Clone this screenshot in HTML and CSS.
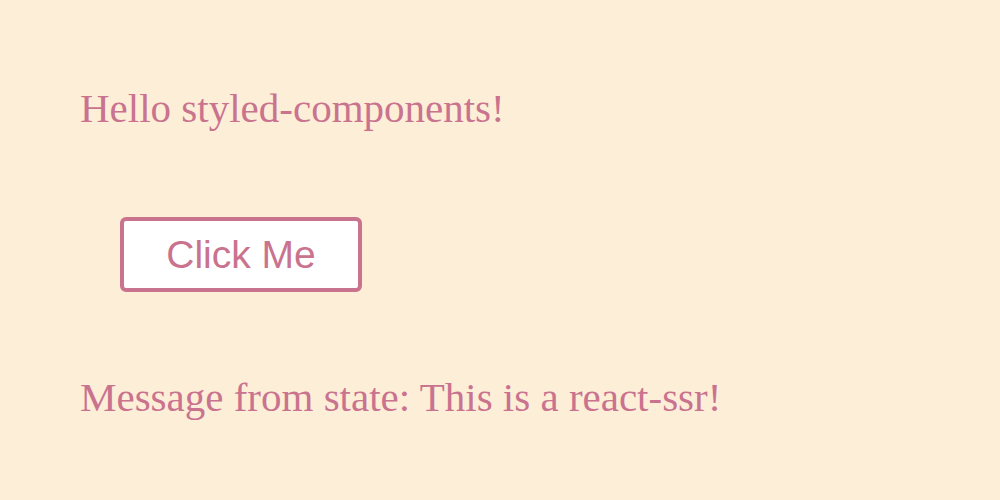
FILE: index.html
```html
<!DOCTYPE html>
<html lang="en">
<head>
    <meta charset="UTF-8">
    <meta name="viewport" content="width=device-width, initial-scale=1.0">
    <title>react-ssr</title>
    <link rel="stylesheet" href="styles.css">
</head>
<body>
    <div class="app">
        <h1 class="title">Hello styled-components!</h1>
        <div class="actions">
            <button class="button">Click Me</button>
        </div>
        <p class="message">Message from state: This is a react-ssr!</p>
    </div>
</body>
</html>
```

FILE: styles.css
```css
body {
    margin: 0;
    background-color: #fdeed8;
    font-family: "Liberation Serif", "Times New Roman", serif;
    color: #c9738f;
}

.app {
    display: flex;
    flex-direction: column;
    align-items: flex-start;
    padding: 86px 80px 0;
}

.title {
    margin: 0;
    font-size: 41px;
    font-weight: normal;
    line-height: 1.107;
}

.actions {
    padding: 86px 0 0 40px;
}

.button {
    width: 242px;
    height: 75px;
    background-color: #fff;
    border: 4px solid #c9738f;
    border-radius: 6px;
    color: #c9738f;
    font-family: "Liberation Sans", Arial, sans-serif;
    font-size: 39px;
    cursor: pointer;
}

.message {
    margin: 83px 0 0;
    font-size: 41px;
    line-height: 1.107;
}
```
